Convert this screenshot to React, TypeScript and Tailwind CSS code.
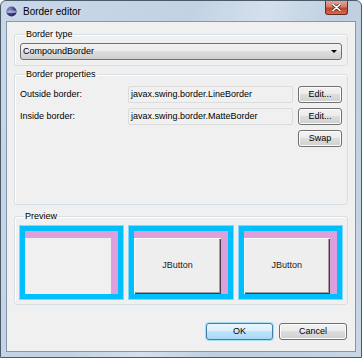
function Btn({ children, primary = false, className = '' }: { children: React.ReactNode; primary?: boolean; className?: string }) {
  return (
    <div
      className={`flex h-[17px] items-center justify-center rounded-[3px] border text-[9px] text-black ${
        primary
          ? 'border-[#3c7fb1] bg-[linear-gradient(#eaf6fd_0%,#d9f0fc_50%,#bee6fd_50%,#a7d9f5_100%)] shadow-[0_0_0_1px_#a8dcf5]'
          : 'border-[#707070] bg-[linear-gradient(#f2f2f2_0%,#ebebeb_50%,#dddddd_50%,#cfcfcf_100%)] shadow-[inset_0_0_0_1px_#fcfcfc]'
      } ${className}`}
    >
      {children}
    </div>
  );
}

function Group({ title, children, className = '' }: { title: string; children: React.ReactNode; className?: string }) {
  return (
    <fieldset className={`mx-[7px] rounded-[3px] border border-[#d5dfe5] shadow-[inset_1px_1px_0_#fff] ${className}`}>
      <legend className="ml-[5px] px-[1px] text-[9px] leading-[12px] text-black">{title}</legend>
      {children}
    </fieldset>
  );
}

function Preview({ button }: { button: boolean }) {
  return (
    <div className="h-[75px] border-[6px] border-[#00bfff] outline outline-1 -outline-offset-1 outline-[#7fd8ff]">
      <div className="flex h-full flex-col border-t-[7px] border-r-[7px] border-[#dda0dd] bg-[#f0f0f0]">
        {button && (
          <div className="flex flex-1 items-center justify-center bg-[#eeeeee] text-[9px] text-[#222] shadow-[inset_1px_1px_0_#fff,inset_-1px_-1px_0_#404040,inset_-2px_-2px_0_#a0a0a0]">
            JButton
          </div>
        )}
      </div>
    </div>
  );
}

export default function App() {
  return (
    <div
      className="flex h-[358px] w-[362px] flex-col overflow-hidden rounded-t-[6px] border border-[#4b5a6b] bg-[linear-gradient(110deg,#c9d8e8_0%,#c3d2e3_40%,#d4e0ec_55%,#bfcfe0_70%,#c8d6e6_100%)]"
      style={{ fontFamily: '"Liberation Sans", Arial, sans-serif' }}
    >
      {/* title bar */}
      <div className="relative flex h-[20px] shrink-0 items-center">
        <svg className="ml-[5px] h-[11px] w-[11px]" viewBox="0 0 12 12">
          <defs>
            <radialGradient id="ball" cx="0.35" cy="0.3" r="0.8">
              <stop offset="0" stopColor="#8a8ccf" />
              <stop offset="0.6" stopColor="#3b3b86" />
              <stop offset="1" stopColor="#1c1c4a" />
            </radialGradient>
          </defs>
          <circle cx="6" cy="6" r="5.5" fill="url(#ball)" />
          <path d="M1 5.2 H11 V6 H1 Z M1.3 7 H10.7 V7.6 H1.3 Z" fill="#fff" opacity="0.9" />
        </svg>
        <span className="ml-[6px] text-[10px] text-black">Border editor</span>
        <div className="absolute right-[13px] top-0 flex h-[14px] w-[23px] items-center justify-center rounded-b-[3px] border border-t-0 border-[#6d2b1d] bg-[linear-gradient(#e8a492_0%,#d47a64_45%,#c0432a_55%,#d26a4f_100%)]">
          <svg width="9" height="7" viewBox="0 0 9 7">
            <path d="M1 0.5 L8 6.5 M8 0.5 L1 6.5" stroke="#5a2a20" strokeWidth="3" strokeLinecap="round" />
            <path d="M1 0.5 L8 6.5 M8 0.5 L1 6.5" stroke="#fff" strokeWidth="1.6" strokeLinecap="round" />
          </svg>
        </div>
      </div>

      {/* client */}
      <div className="mx-[5px] mb-[5px] flex flex-1 flex-col border border-[#8797aa] bg-[#f0f0f0]">
        <Group title="Border type" className="mt-[6px] px-[5px] pb-[5px]">
          <div className="mt-[3px] flex h-[17px] items-center justify-between rounded-[3px] border border-[#707070] bg-[linear-gradient(#f2f2f2_0%,#ebebeb_50%,#dddddd_50%,#cfcfcf_100%)] pl-[2px] pr-[4px] text-[9px] text-black">
            <span>CompoundBorder</span>
            <svg width="6" height="3" viewBox="0 0 6 3">
              <path d="M0 0 H6 L3 3 Z" fill="#000" />
            </svg>
          </div>
        </Group>

        <Group title="Border properties" className="mt-[2px] px-[5px] pb-[57px]">
          <div className="mt-[6px] flex flex-col gap-[5px] text-[9px] text-black">
            {[
              ['Outside border:', 'javax.swing.border.LineBorder'],
              ['Inside border:', 'javax.swing.border.MatteBorder'],
            ].map(([label, value]) => (
              <div key={label} className="flex h-[17px] items-center gap-[5px]">
                <span className="w-[103px]">{label}</span>
                <div className="flex h-full w-[165px] items-center rounded-[2px] border border-[#dcdcdc] bg-[#f0f0f0] pl-[2px]">
                  {value}
                </div>
                <Btn className="w-[44px]">Edit...</Btn>
              </div>
            ))}
            <div className="flex justify-end">
              <Btn className="w-[44px]">Swap</Btn>
            </div>
          </div>
        </Group>

        <Group title="Preview" className="mt-[5px] px-[4px] pb-[4px]">
          <div className="mt-[3px] grid grid-cols-3 gap-[4px]">
            <Preview button={false} />
            <Preview button />
            <Preview button />
          </div>
        </Group>

        <div className="mt-[18px] flex justify-end gap-[6px] pr-[8px]">
          <Btn primary className="w-[67px]">OK</Btn>
          <Btn className="w-[68px]">Cancel</Btn>
        </div>
      </div>
    </div>
  );
}
